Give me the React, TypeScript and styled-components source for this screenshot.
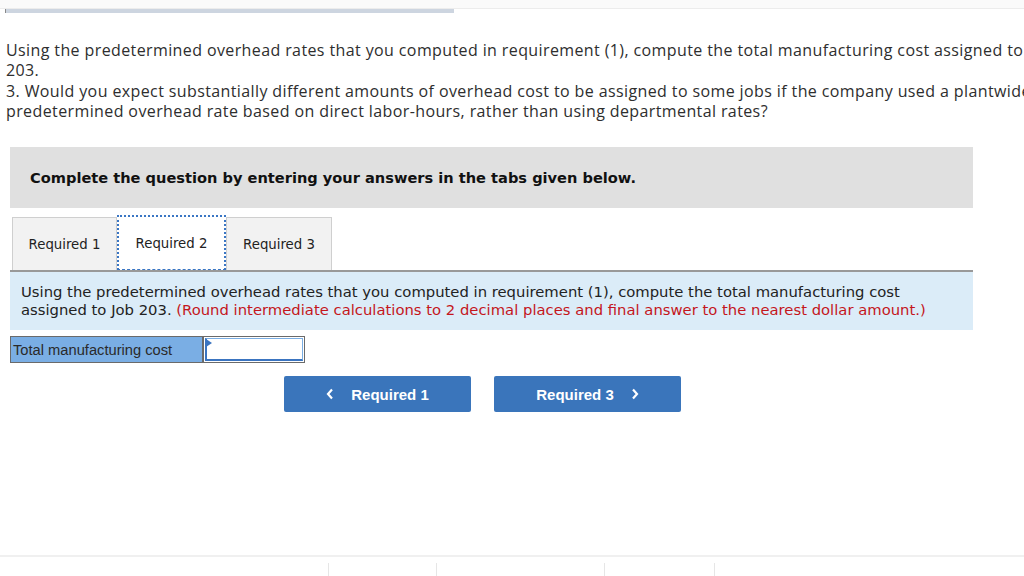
import React from "react";
import styled, { createGlobalStyle } from "styled-components";

const Global = createGlobalStyle`
  html, body { margin: 0; padding: 0; background: #fff; overflow: hidden; }
  body { width: 1024px; height: 576px; }
`;

const Page = styled.div`
  position: relative;
  width: 1024px;
  height: 576px;
  overflow: hidden;
  display: flex;
  flex-direction: column;
`;

const TopStrip = styled.div`
  height: 8px;
  background: #fafafa;
  border-bottom: 1px solid #ececec;
`;

const Progress = styled.div`
  margin: 0 0 0 5px;
  width: 448px;
  height: 4px;
  background: #cdd5e0;
  border-left: 1px solid #8a8a8a;
`;

const Question = styled.div`
  margin: 27px 0 0 6px;
  font-family: "Open Sans", Lato, sans-serif;
  font-size: 16px;
  line-height: 20.3px;
  letter-spacing: 0.39px;
  color: #2e2e2e;
  white-space: nowrap;
`;

const Panel = styled.div`
  width: 963px;
  margin: 26px 0 0 10px;
  display: flex;
  flex-direction: column;
`;

const Instruction = styled.div`
  height: 61px;
  background: #e0e0e0;
  display: flex;
  align-items: center;
  padding-left: 20px;
  font-family: "DejaVu Sans", Verdana, sans-serif;
  font-weight: bold;
  font-size: 14.6px;
  color: #111;
`;

const TabRow = styled.div`
  display: flex;
  margin-top: 9px;
  padding-left: 2px;
  border-bottom: 2px solid #999;
`;

const Tab = styled.div<{ $active?: boolean; $w: number }>`
  width: ${(p) => p.$w}px;
  display: flex;
  align-items: center;
  justify-content: center;
  box-sizing: border-box;
  background: ${(p) => (p.$active ? "#fff" : "#f2f2f2")};
  border: ${(p) => (p.$active ? "2px dotted #3a76c4" : "1px solid #cfcfcf")};
  border-bottom: ${(p) => (p.$active ? "1px dashed #3a76c4" : "none")};
  font-family: "DejaVu Sans", Verdana, sans-serif;
  font-size: 13.3px;
  color: #222;
  margin-bottom: ${(p) => (p.$active ? "-2px" : "0")};
  height: ${(p) => (p.$active ? "55px" : "53px")};
  margin-top: ${(p) => (p.$active ? "-2px" : "0")};
`;

const Info = styled.div`
  background: #dbecf8;
  padding: 11px 11px 11px;
  font-family: "DejaVu Sans", Verdana, sans-serif;
  font-size: 14.8px;
  line-height: 18px;
  color: #222;
  white-space: nowrap;
`;

const Red = styled.span`
  color: #c4161c;
`;

const AnswerRow = styled.div`
  display: flex;
  margin-top: 6px;
`;

const Label = styled.div`
  width: 194px;
  height: 27px;
  box-sizing: border-box;
  background: #7aaee4;
  border: 1px solid #6a6a6a;
  border-right: 2px solid #6a6a6a;
  display: flex;
  align-items: center;
  padding-left: 2px;
  font-family: "Liberation Sans", Arial, sans-serif;
  font-size: 14.7px;
  color: #2a2a2a;
`;

const InputWrap = styled.div`
  position: relative;
  width: 101px;
  height: 27px;
  box-sizing: border-box;
  border: 1px solid #6a6a6a;
  border-left: none;
  padding: 1px;
  background: #fff;
`;

const Input = styled.input`
  width: 100%;
  height: 100%;
  box-sizing: border-box;
  border-style: solid;
  border-width: 1px 1px 2px 2px;
  border-color: #7aaee4 #7aaee4 #3a74c0 #3a74c0;
  outline: none;
  padding: 0;
  background: #fff;
`;

const Flag = styled.div`
  position: absolute;
  left: 2px;
  top: 2px;
  width: 0;
  height: 0;
  border-top: 4px solid transparent;
  border-bottom: 4px solid transparent;
  border-left: 6px solid #3a74c0;
`;

const NavRow = styled.div`
  display: flex;
  gap: 23px;
  margin: 13px 0 0 284px;
`;

const NavButton = styled.button`
  width: 187px;
  height: 36px;
  border: none;
  border-radius: 2px;
  background: #3a75bb;
  color: #fff;
  font-family: "Liberation Sans", Arial, sans-serif;
  font-weight: bold;
  font-size: 15px;
  display: flex;
  align-items: center;
  justify-content: center;
  gap: 17px;
  padding: 0;
  cursor: pointer;
`;

const Footer = styled.div`
  margin-top: auto;
  border-top: 2px solid #f0f0f0;
  height: 21px;
  box-sizing: border-box;
  padding-top: 6px;
  display: flex;
`;

const Divider = styled.div<{ $x: number }>`
  width: 1px;
  background: #e6e6e6;
  margin-left: ${(p) => p.$x}px;
`;

const Chevron = ({ dir }: { dir: "l" | "r" }) => (
  <svg width="8" height="12" viewBox="0 0 8 12">
    <path
      d={dir === "l" ? "M6 1.5 L2 6 L6 10.5" : "M2 1.5 L6 6 L2 10.5"}
      fill="none"
      stroke="#fff"
      strokeWidth="2.2"
    />
  </svg>
);

export default function App() {
  return (
    <Page>
      <Global />
      <TopStrip />
      <Progress />
      <Question>
        Using the predetermined overhead rates that you computed in requirement (1), compute the total manufacturing cost assigned to Job
        <br />
        203.
        <br />
        3. Would you expect substantially different amounts of overhead cost to be assigned to some jobs if the company used a plantwide
        <br />
        predetermined overhead rate based on direct labor-hours, rather than using departmental rates?
      </Question>
      <Panel>
        <Instruction>Complete the question by entering your answers in the tabs given below.</Instruction>
        <TabRow>
          <Tab $w={105}>Required 1</Tab>
          <Tab $w={109} $active>
            Required 2
          </Tab>
          <Tab $w={106}>Required 3</Tab>
        </TabRow>
        <Info>
          Using the predetermined overhead rates that you computed in requirement (1), compute the total manufacturing cost
          <br />
          assigned to Job 203. <Red>(Round intermediate calculations to 2 decimal places and final answer to the nearest dollar amount.)</Red>
        </Info>
        <AnswerRow>
          <Label>Total manufacturing cost</Label>
          <InputWrap>
            <Input aria-label="Total manufacturing cost" />
            <Flag />
          </InputWrap>
        </AnswerRow>
      </Panel>
      <NavRow>
        <NavButton>
          <Chevron dir="l" />
          Required 1
        </NavButton>
        <NavButton>
          Required 3
          <Chevron dir="r" />
        </NavButton>
      </NavRow>
      <Footer>
        <Divider $x={328} />
        <Divider $x={107} />
        <Divider $x={167} />
        <Divider $x={109} />
      </Footer>
    </Page>
  );
}
